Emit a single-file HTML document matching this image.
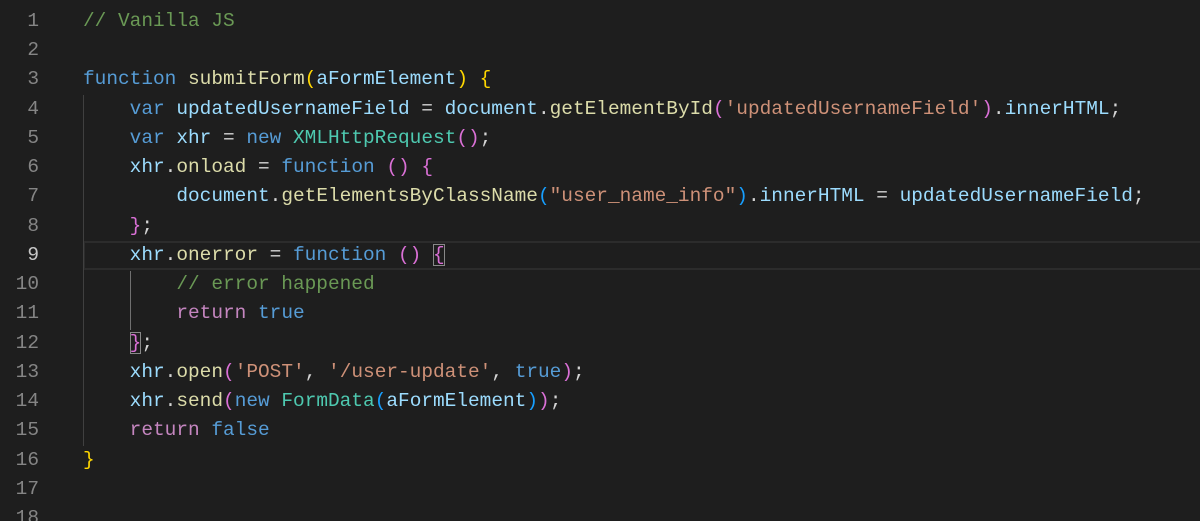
<!DOCTYPE html>
<html><head><meta charset="utf-8"><style>
html,body{margin:0;padding:0;background:#1e1e1e;width:1200px;height:521px;overflow:hidden;}
.wrap{position:relative;width:1200px;height:521px;font-family:"Liberation Mono",monospace;font-size:19.45px;}
.ln{position:absolute;left:0;width:39px;text-align:right;color:#858585;}
.code{position:absolute;left:83px;color:#d4d4d4;}
.row{height:29.25px;line-height:29.25px;white-space:pre;}
.c{color:#6a9955}.k{color:#569cd6}.f{color:#dcdcaa}.v{color:#9cdcfe}.t{color:#4ec9b0}.s{color:#ce9178}.r{color:#c586c0}
.y{color:#ffd700}.p{color:#da70d6}.b{color:#179fff}
.box{outline:1px solid #888;outline-offset:-1px;}
</style></head><body><div class="wrap">
<div style="position:absolute;left:83px;right:0;top:241px;height:29px;border:2px solid #2c2c2c;border-right:none;box-sizing:border-box;"></div>
<div style="position:absolute;left:83px;top:95px;width:1px;height:351px;background:#404040"></div>
<div style="position:absolute;left:130px;top:271px;width:1px;height:59px;background:#707070"></div>
<div class="ln" style="top:-22.5px">
<div class="row"> </div>
<div class="row">1</div><div class="row">2</div><div class="row">3</div><div class="row">4</div><div class="row">5</div><div class="row">6</div><div class="row">7</div><div class="row">8</div><div class="row" style="color:#c6c6c6">9</div><div class="row">10</div><div class="row">11</div><div class="row">12</div><div class="row">13</div><div class="row">14</div><div class="row">15</div><div class="row">16</div><div class="row">17</div><div class="row">18</div>
</div>
<div class="code" style="top:6.9px">
<div class="row"><span class="c">// Vanilla JS</span></div>
<div class="row"> </div>
<div class="row"><span class="k">function</span> <span class="f">submitForm</span><span class="y">(</span><span class="v">aFormElement</span><span class="y">)</span> <span class="y">{</span></div>
<div class="row">    <span class="k">var</span> <span class="v">updatedUsernameField</span> = <span class="v">document</span>.<span class="f">getElementById</span><span class="p">(</span><span class="s">'updatedUsernameField'</span><span class="p">)</span>.<span class="v">innerHTML</span>;</div>
<div class="row">    <span class="k">var</span> <span class="v">xhr</span> = <span class="k">new</span> <span class="t">XMLHttpRequest</span><span class="p">()</span>;</div>
<div class="row">    <span class="v">xhr</span>.<span class="f">onload</span> = <span class="k">function</span> <span class="p">()</span> <span class="p">{</span></div>
<div class="row">        <span class="v">document</span>.<span class="f">getElementsByClassName</span><span class="b">(</span><span class="s">"user_name_info"</span><span class="b">)</span>.<span class="v">innerHTML</span> = <span class="v">updatedUsernameField</span>;</div>
<div class="row">    <span class="p">}</span>;</div>
<div class="row">    <span class="v">xhr</span>.<span class="f">onerror</span> = <span class="k">function</span> <span class="p">()</span> <span class="p box">{</span></div>
<div class="row">        <span class="c">// error happened</span></div>
<div class="row">        <span class="r">return</span> <span class="k">true</span></div>
<div class="row">    <span class="p box">}</span>;</div>
<div class="row">    <span class="v">xhr</span>.<span class="f">open</span><span class="p">(</span><span class="s">'POST'</span>, <span class="s">'/user-update'</span>, <span class="k">true</span><span class="p">)</span>;</div>
<div class="row">    <span class="v">xhr</span>.<span class="f">send</span><span class="p">(</span><span class="k">new</span> <span class="t">FormData</span><span class="b">(</span><span class="v">aFormElement</span><span class="b">)</span><span class="p">)</span>;</div>
<div class="row">    <span class="r">return</span> <span class="k">false</span></div>
<div class="row"><span class="y">}</span></div>
</div>
</div></body></html>
